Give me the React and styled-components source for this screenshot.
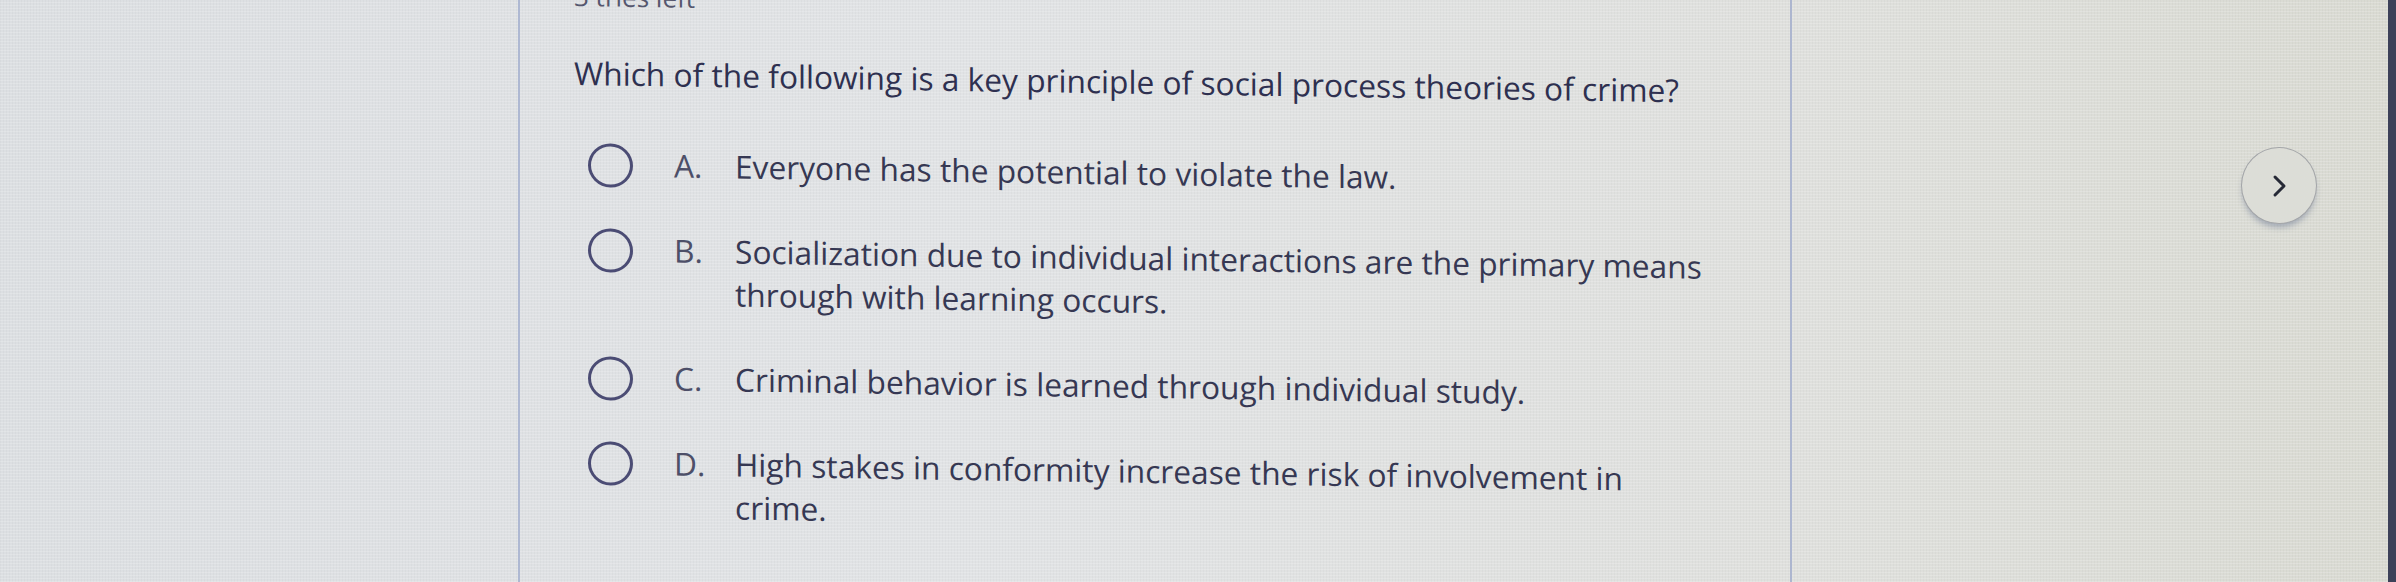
import styled, { createGlobalStyle } from "styled-components"

const GlobalStyle = createGlobalStyle`
html, body {
  margin: 0;
  padding: 0;
  height: 582px;
  overflow: hidden;
}
body {
  font-family: "Open Sans", "Noto Sans", sans-serif;
  background: #dfe1e3;
}
`

const Screen = styled.div`
display: flex;
width: 2396px;
height: 582px;
overflow: hidden;
background:
  repeating-linear-gradient(0deg, rgba(255,255,255,0.18) 0 1px, transparent 1px 3px),
  repeating-linear-gradient(90deg, rgba(0,0,0,0.025) 0 1px, transparent 1px 3px),
  linear-gradient(90deg, #dcdfe2 0%, #e1e3e5 40%, #dfe0dd 75%, #d9dad2 100%);
`

const SidePane = styled.div`
width: 518px;
flex-shrink: 0;
border-right: 2px solid #aeb8d2;
`

const Main = styled.main`
width: 1216px;
flex-shrink: 0;
padding-left: 54px;
border-right: 2px solid #adb6cf;
`

/* the photo is taken at a slight angle: lines of text fall to the right */
const Content = styled.div`
display: flex;
flex-direction: column;
transform: skewY(0.9deg);
transform-origin: 576px 0;
`

const TriesLeft = styled.div`
font-size: 26px;
line-height: 26px;
color: #55576e;
margin-top: -8px;
height: 26px;
`

const Question = styled.h2`
margin: 42px 0 0;
font-size: 31.7px;
font-weight: 400;
line-height: 43px;
color: #2e3050;
`

const Options = styled.ul`
list-style: none;
margin: 48px 0 0;
padding: 0 0 0 14px;
display: flex;
flex-direction: column;
gap: 42px;
`

const Option = styled.li`
display: flex;
align-items: flex-start;
`

const Radio = styled.span`
box-sizing: border-box;
width: 45px;
height: 44px;
flex-shrink: 0;
margin: 1px 41px -2px 0;
border: 3.5px solid #4b4c74;
border-radius: 50%;
`

const Letter = styled.span`
width: 61px;
flex-shrink: 0;
font-size: 31.7px;
line-height: 43px;
color: #4d4f68;
`

const OptionText = styled.span`
width: ${props => props.$width}px;
font-size: 31.7px;
line-height: 43px;
color: #363853;
`

const RightPane = styled.div`
flex: 1;
display: flex;
justify-content: flex-end;
align-items: flex-start;
padding: 147px 71px 0 0;
`

const NextButton = styled.button`
width: 76px;
height: 77px;
border-radius: 50%;
border: 1.5px solid #a3a5a8;
background: #dcddd7;
box-shadow: 0 5px 6px -2px rgba(80, 95, 130, 0.45);
display: flex;
align-items: center;
justify-content: center;
padding: 0;
cursor: pointer;
`

const EdgeStrip = styled.div`
width: 8px;
flex-shrink: 0;
background: #3c4159;
`

const options = [
    { letter: "A.", text: "Everyone has the potential to violate the law." },
    { letter: "B.", text: "Socialization due to individual interactions are the primary means through with learning occurs." },
    { letter: "C.", text: "Criminal behavior is learned through individual study." },
    { letter: "D.", text: "High stakes in conformity increase the risk of involvement in crime." },
]

const App = () => {
    return (
        <>
            <GlobalStyle />
            <Screen>
                <SidePane />
                <Main>
                    <Content>
                        <TriesLeft>3 tries left</TriesLeft>
                        <Question>Which of the following is a key principle of social process theories of crime?</Question>
                        <Options>
                            {options.map(o => (
                                <Option key={o.letter}>
                                    <Radio />
                                    <Letter>{o.letter}</Letter>
                                    <OptionText $width={972}>{o.text}</OptionText>
                                </Option>
                            ))}
                        </Options>
                    </Content>
                </Main>
                <RightPane>
                    <NextButton aria-label="Next">
                        <svg width="22" height="26" viewBox="0 0 22 26" fill="none">
                            <path d="M7 4 L16 13 L7 22" stroke="#262936" strokeWidth="3" strokeLinecap="round" strokeLinejoin="round" />
                        </svg>
                    </NextButton>
                </RightPane>
                <EdgeStrip />
            </Screen>
        </>
    )
}

export default App
